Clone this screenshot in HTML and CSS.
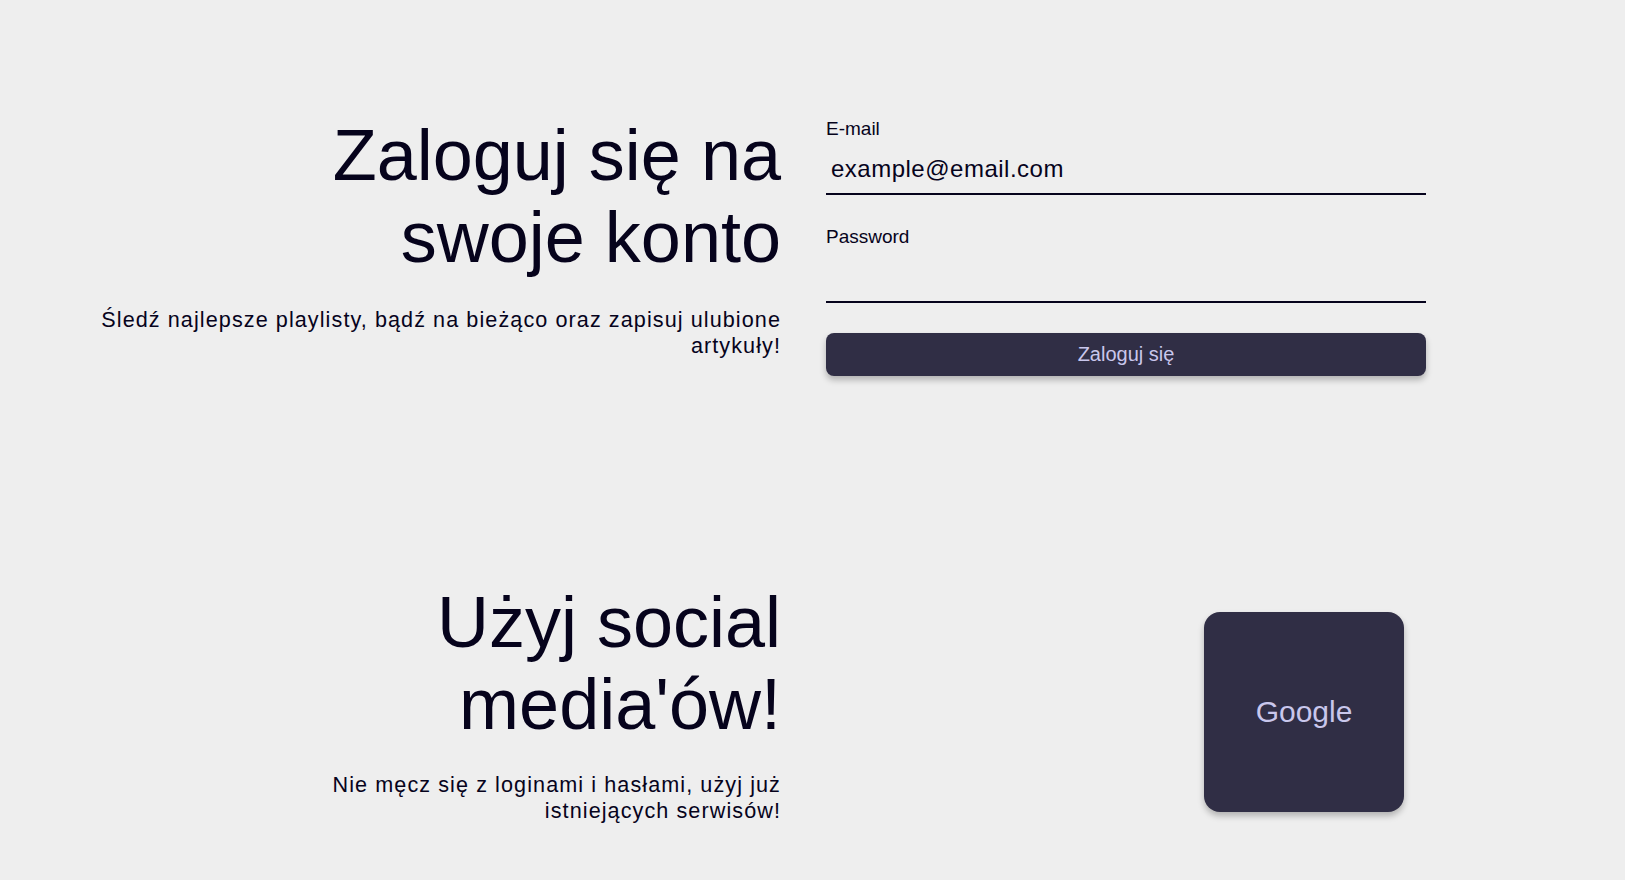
FILE: index.html
```html
<!DOCTYPE html>
<html lang="pl">
<head>
<meta charset="utf-8">
<title>Zaloguj się</title>
<link rel="stylesheet" href="styles.css">
</head>
<body>
<main class="page">
  <section class="section section-login">
    <div class="intro">
      <h1 class="title">Zaloguj się na swoje konto</h1>
      <p class="lead lead-wide">Śledź najlepsze playlisty, bądź na bieżąco oraz zapisuj ulubione artykuły!</p>
    </div>
    <form class="panel form">
      <div class="field">
        <label class="label" for="email">E-mail</label>
        <input class="input" id="email" type="email" value="example@email.com">
      </div>
      <div class="field field-next">
        <label class="label" for="password">Password</label>
        <input class="input" id="password" type="password">
      </div>
      <button class="submit" type="button">Zaloguj się</button>
    </form>
  </section>
  <section class="section section-social">
    <div class="intro">
      <h2 class="title">Użyj social media'ów!</h2>
      <p class="lead lead-narrow">Nie męcz się z loginami i hasłami, użyj już istniejących serwisów!</p>
    </div>
    <div class="panel social">
      <button class="social-btn" type="button">Google</button>
    </div>
  </section>
</main>
</body>
</html>
```
FILE: styles.css
```css
html, body {
  margin: 0;
  padding: 0;
}

body {
  background: #eeeeee;
  color: #06031c;
  font-family: "Liberation Sans", Arial, Helvetica, sans-serif;
}

.page {
  padding-top: 114px;
}

.section {
  display: flex;
  gap: 45px;
  align-items: flex-start;
}

.section-social {
  margin-top: 205px;
}

.intro {
  width: 781px;
  flex: none;
  display: flex;
  flex-direction: column;
  align-items: flex-end;
  text-align: right;
}

.title {
  margin: 0;
  max-width: 560px;
  font-size: 72px;
  font-weight: 400;
  line-height: normal;
  color: #06031c;
}

.lead {
  margin: 27px 0 0;
  font-size: 21.6px;
  letter-spacing: 0.05em;
  line-height: 1.2;
}

.lead-wide {
  margin-top: 29px;
  max-width: 710px;
}

.lead-narrow {
  max-width: 520px;
}

.panel {
  width: 600px;
  flex: none;
}

.form {
  margin-top: 4px;
  display: flex;
  flex-direction: column;
}

.field {
  display: flex;
  flex-direction: column;
}

.field-next {
  margin-top: 31px;
}

.label {
  font-size: 19px;
  line-height: normal;
  color: #06031c;
}

.input {
  margin-top: 7px;
  padding: 8px 5px 10px;
  border: none;
  border-bottom: 2px solid #06031c;
  background: transparent;
  font-family: "Liberation Sans", Arial, sans-serif;
  font-size: 24px;
  letter-spacing: 0.5px;
  line-height: normal;
  color: #06031c;
  outline: none;
}

.submit {
  margin-top: 30px;
  height: 43px;
  border: none;
  border-radius: 8px;
  background: #302e45;
  color: #c9c7ec;
  font-family: "Liberation Sans", Arial, sans-serif;
  font-size: 20px;
  box-shadow: 0 4px 6px rgba(0, 0, 0, 0.25);
  cursor: pointer;
}

.social {
  display: flex;
  justify-content: flex-end;
  padding-right: 22px;
  box-sizing: border-box;
  margin-top: 31px;
}

.social-btn {
  width: 200px;
  height: 200px;
  border: none;
  border-radius: 16px;
  background: #302e45;
  color: #c9c7ec;
  font-family: "Liberation Sans", Arial, sans-serif;
  font-size: 30px;
  box-shadow: 0 4px 6px rgba(0, 0, 0, 0.25);
  cursor: pointer;
}
```
